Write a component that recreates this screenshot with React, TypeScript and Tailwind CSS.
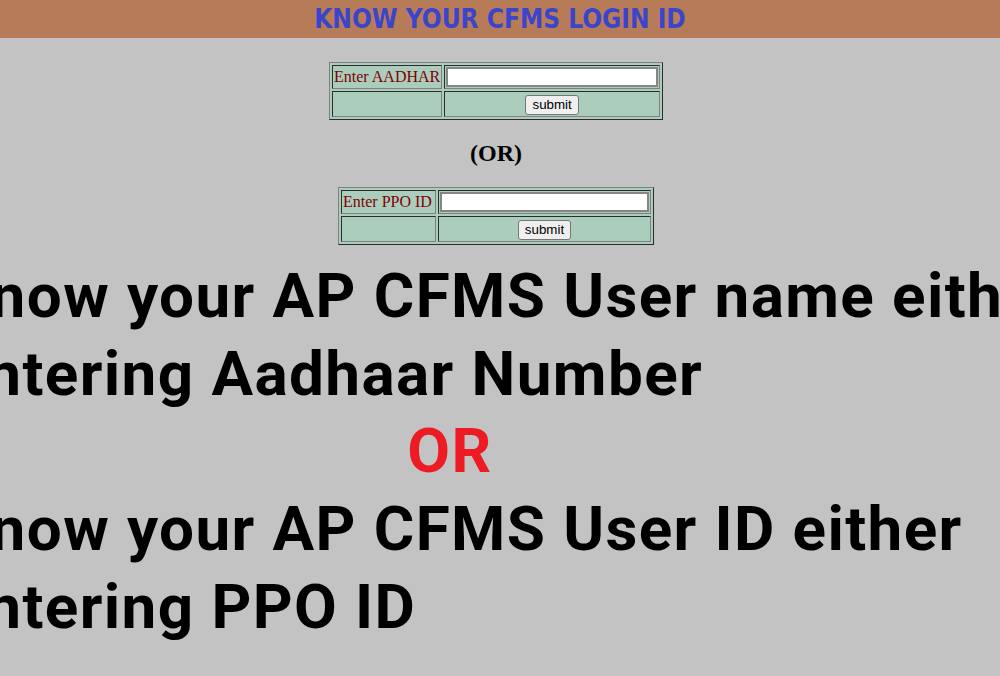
import React from "react";

function FormTable({ label, tableW, labelW }: { label: string; tableW: string; labelW: string }) {
  return (
    <table
      className={`${tableW} mx-auto border border-[#808080] [border-style:outset] border-separate border-spacing-[2px] bg-[#abcdbc]`}
    >
      <tbody>
        <tr>
          <td
            className={`${labelW} h-[24px] border border-[#808080] [border-style:inset] p-px text-[16px] leading-[18px] text-[#800000] whitespace-nowrap`}
            style={{ fontFamily: '"Liberation Serif", serif' }}
          >
            {label}
          </td>
          <td className="border border-[#808080] [border-style:inset] p-px leading-none">
            <input
              type="text"
              className="block w-full h-[20px] bg-white border-2 border-[#858585] px-[2px] text-[13px]"
            />
          </td>
        </tr>
        <tr>
          <td className="border border-[#808080] [border-style:inset] p-px h-[26px]"></td>
          <td className="border border-[#808080] [border-style:inset] p-px text-center leading-[20px]">
            <button
              type="button"
              className="inline-block align-middle h-[20px] px-[6px] bg-[#efefef] border border-[#767676] rounded-[3px] text-[13.33px] leading-[16px] text-black"
              style={{ fontFamily: '"Liberation Sans", Arial, sans-serif' }}
            >
              submit
            </button>
          </td>
        </tr>
      </tbody>
    </table>
  );
}

export default function App() {
  const big = { fontFamily: 'Roboto, "Liberation Sans", sans-serif' };
  return (
    <div className="min-h-[676px] w-full bg-[#c3c3c3] overflow-hidden">
      <div className="h-[38px] bg-[#b87b58] flex items-center justify-center">
        <span
          className="text-[#3b45cb] text-[26px] font-bold leading-none"
          style={{ fontFamily: '"DejaVu Sans Condensed", "DejaVu Sans", sans-serif', fontStretch: "condensed" }}
        >
          KNOW YOUR CFMS LOGIN ID
        </span>
      </div>

      <div className="pr-2 pt-[24px]">
        <FormTable label="Enter AADHAR" tableW="w-[334px]" labelW="w-[110px]" />
        <h2
          className="text-center font-bold text-[24px] leading-[27px] text-black mt-[20px] mb-[20px]"
          style={{ fontFamily: '"Liberation Serif", serif' }}
        >
          (OR)
        </h2>
        <FormTable label="Enter PPO ID" tableW="w-[316px]" labelW="w-[95px]" />
      </div>

      <div className="ml-[-50px] w-[1000px] mt-[12px] font-bold text-black text-[62px] leading-[77.7px] tracking-[1.4px] whitespace-nowrap" style={big}>
        <div>Know your AP CFMS User name either</div>
        <div>Entering Aadhaar Number</div>
        <div className="text-center text-[#ed1c24]">OR</div>
        <div>Know your AP CFMS User ID either</div>
        <div>Entering PPO ID</div>
      </div>
    </div>
  );
}
